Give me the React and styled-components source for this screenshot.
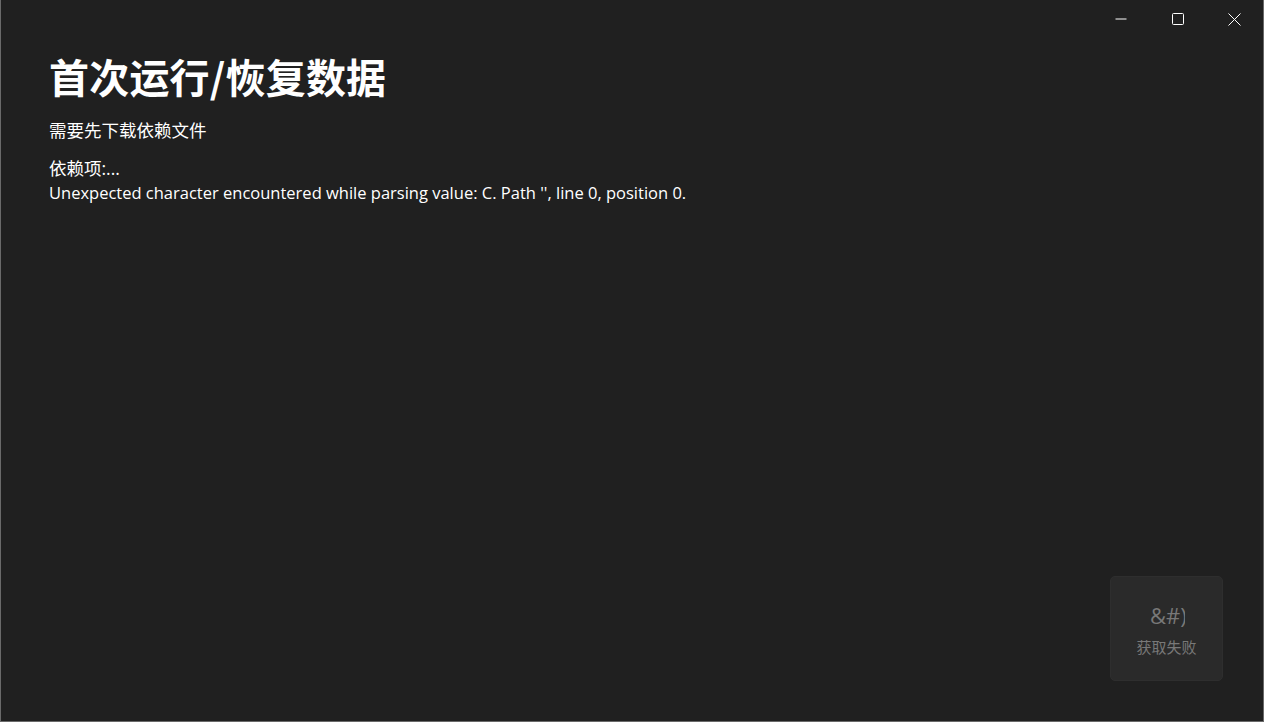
import React from "react"
import styled, { createGlobalStyle } from "styled-components"

const GlobalStyle = createGlobalStyle`
  html, body {
    margin: 0;
    padding: 0;
    background: #202020;
  }
  body {
    font-family: "Open Sans", "Noto Sans CJK SC", sans-serif;
  }
`

export default function App() {
  return (
    <>
      <GlobalStyle />
      <Window>
        <TitleBar>
          <CaptionButton aria-label="minimize">
            <svg width="12" height="12" viewBox="0 0 12 12">
              <path d="M0.5 6h11" stroke="#fff" strokeWidth="1" />
            </svg>
          </CaptionButton>
          <CaptionButton aria-label="maximize">
            <svg width="12" height="12" viewBox="0 0 12 12">
              <rect x="0.5" y="0.5" width="11" height="11" rx="1" fill="none" stroke="#fff" strokeWidth="1" />
            </svg>
          </CaptionButton>
          <CaptionButton aria-label="close">
            <svg width="13" height="13" viewBox="0 0 13 13">
              <path d="M0.5 0.5l12 12M12.5 0.5l-12 12" stroke="#fff" strokeWidth="1" />
            </svg>
          </CaptionButton>
        </TitleBar>
        <Content>
          <Title>首次运行/恢复数据</Title>
          <Subtitle>需要先下载依赖文件</Subtitle>
          <Details>
            <Line>依赖项:...</Line>
            <Line $latin>Unexpected character encountered while parsing value: C. Path '', line 0, position 0.</Line>
          </Details>
        </Content>
        <Footer>
          <StatusCard>
            <Glyph>&amp;#)</Glyph>
            <StatusLabel>获取失败</StatusLabel>
          </StatusCard>
        </Footer>
      </Window>
    </>
  )
}

const Window = styled.div`
  box-sizing: border-box;
  width: 1264px;
  height: 722px;
  display: flex;
  flex-direction: column;
  background: #202020;
  border-left: 1px solid #6a6a6a;
  border-right: 1px solid #6a6a6a;
  border-bottom: 1px solid #6a6a6a;
  color: #ffffff;
  overflow: hidden;
`

const TitleBar = styled.div`
  display: flex;
  justify-content: flex-end;
  height: 38px;
  flex-shrink: 0;
`

const CaptionButton = styled.div`
  width: 57px;
  height: 38px;
  display: flex;
  align-items: center;
  justify-content: center;
`

const Content = styled.div`
  flex: 1;
  padding: 10px 48px 0 48px;
  display: flex;
  flex-direction: column;
`

const Title = styled.h1`
  margin: 0;
  font-family: "Noto Sans CJK SC", sans-serif;
  font-size: 40px;
  font-weight: 700;
  line-height: 56px;
  letter-spacing: 0.2px;
`

const Subtitle = styled.div`
  margin-top: 14px;
  font-family: "Open Sans", "Noto Sans CJK SC", sans-serif;
  font-size: 17.5px;
  line-height: 24px;
`

const Details = styled.div`
  margin-top: 14px;
  display: flex;
  flex-direction: column;
`

const Line = styled.div`
  font-family: "Open Sans", "Noto Sans CJK SC", sans-serif;
  font-size: ${p => (p.$latin ? "16.5px" : "17.5px")};
  line-height: ${p => (p.$latin ? "26px" : "24px")};
  white-space: nowrap;
`

const Footer = styled.div`
  display: flex;
  justify-content: flex-end;
  padding: 0 40px 40px 0;
`

const StatusCard = styled.div`
  box-sizing: border-box;
  width: 113px;
  height: 105px;
  border-radius: 5px;
  background: #2a2a2a;
  border: 1px solid #2e2e2e;
  display: flex;
  flex-direction: column;
  align-items: center;
  justify-content: center;
  gap: 8px;
  color: #787878;
`

const Glyph = styled.div`
  box-sizing: border-box;
  width: 36px;
  padding-left: 1px;
  margin-left: 1px;
  overflow: hidden;
  white-space: nowrap;
  font-family: "Open Sans", sans-serif;
  font-size: 22px;
  line-height: 28px;
`

const StatusLabel = styled.div`
  font-family: "Noto Sans CJK SC", sans-serif;
  font-size: 15px;
  line-height: 20px;
`
